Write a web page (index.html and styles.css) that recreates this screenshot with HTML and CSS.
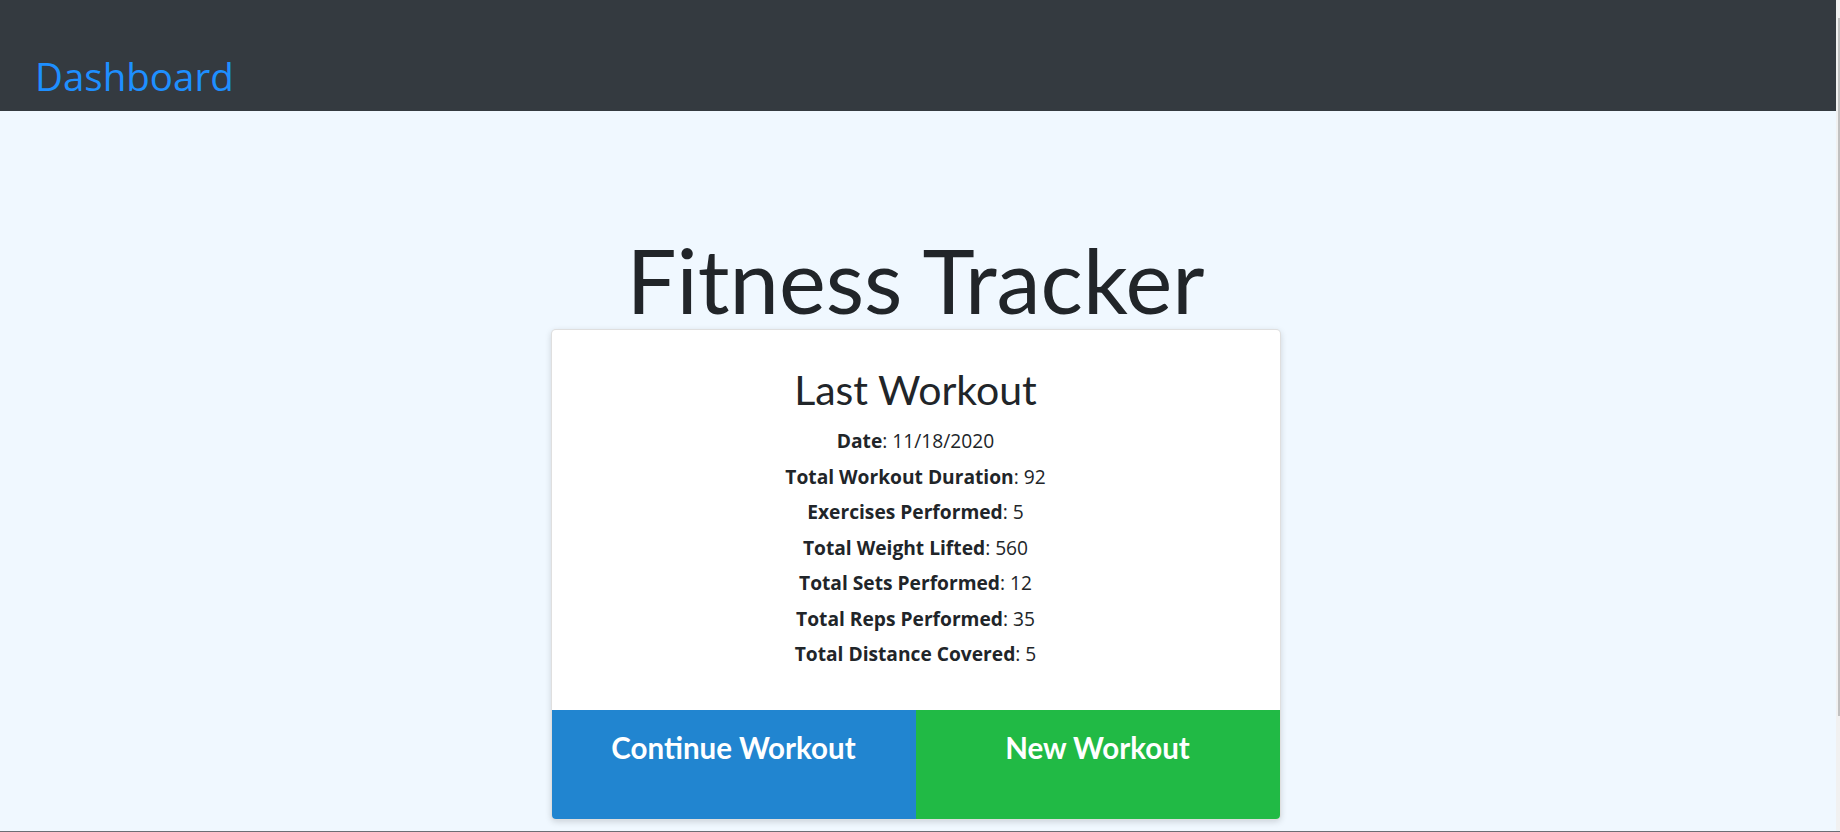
FILE: index.html
```html
<!DOCTYPE html>
<html lang="en">
<head>
<meta charset="utf-8">
<title>Fitness Tracker</title>
<link rel="stylesheet" href="styles.css">
</head>
<body>
<div class="window">
  <div class="frame">
    <main class="page">
      <nav class="navbar">
        <a class="brand" href="#">Dashboard</a>
      </nav>
      <div class="content">
        <h1 class="title">Fitness Tracker</h1>
        <section class="card">
          <div class="card-body">
            <h2 class="card-title">Last Workout</h2>
            <div class="stats">
              <div class="stat"><strong>Date</strong>: 11/18/2020</div>
              <div class="stat"><strong>Total Workout Duration</strong>: 92</div>
              <div class="stat"><strong>Exercises Performed</strong>: 5</div>
              <div class="stat"><strong>Total Weight Lifted</strong>: 560</div>
              <div class="stat"><strong>Total Sets Performed</strong>: 12</div>
              <div class="stat"><strong>Total Reps Performed</strong>: 35</div>
              <div class="stat"><strong>Total Distance Covered</strong>: 5</div>
            </div>
          </div>
          <div class="actions">
            <button class="btn btn-blue" type="button">Continue Workout</button>
            <button class="btn btn-green" type="button">New Workout</button>
          </div>
        </section>
      </div>
    </main>
    <div class="scrollbar"><div class="thumb"></div></div>
  </div>
  <div class="edge"></div>
</div>
</body>
</html>
```
FILE: styles.css
```css
* { box-sizing: border-box; }
html, body { margin: 0; padding: 0; height: 100%; }
body {
  background: #f0f8ff;
  color: #212529;
  font-family: "Open Sans", "Noto Sans", "Liberation Sans", sans-serif;
  overflow: hidden;
}
.window {
  display: flex;
  flex-direction: column;
  height: 832px;
}
.frame {
  flex: 1;
  display: flex;
  min-height: 0;
}
.page {
  flex: 1;
  min-width: 0;
  overflow: hidden;
  background: #f0f8ff;
}
.navbar {
  height: 111px;
  background: #343a40;
  padding: 57px 0 0 35px;
}
.brand {
  display: inline-block;
  font-family: "Open Sans", "Noto Sans", sans-serif;
  font-size: 38.5px;
  line-height: 1;
  color: #1e8fff;
  text-decoration: none;
}
.content {
  padding-right: 5px;
}
.title {
  margin: 121px 0 0;
  text-align: center;
  font-family: Lato, "Liberation Sans", sans-serif;
  font-weight: 400;
  font-size: 88.6px;
  line-height: 1.1;
  color: #212529;
}
.card {
  width: 730px;
  margin: 0 auto 0;
  background: #fff;
  border: 1px solid rgba(0, 0, 0, 0.125);
  border-radius: 5px;
  box-shadow: 0 2px 6px rgba(0, 0, 0, 0.15);
  overflow: hidden;
}
.card-body {
  padding: 36px 20px 38px;
  text-align: center;
}
.card-title {
  margin: 0 0 9px;
  font-family: Lato, "Liberation Sans", sans-serif;
  font-weight: 400;
  font-size: 41px;
  line-height: 48px;
  color: #212529;
}
.stat {
  font-size: 19.2px;
  line-height: 35.5px;
  color: #212529;
}
.stat strong { font-weight: 700; }
.actions {
  display: flex;
  height: 109px;
}
.btn {
  flex: 1;
  border: 0;
  margin: 0;
  padding: 20px 0 0;
  display: flex;
  justify-content: center;
  align-items: flex-start;
  font-family: Lato, "Liberation Sans", sans-serif;
  font-weight: 700;
  font-size: 29.5px;
  line-height: 1.2;
  color: #fff;
  cursor: pointer;
}
.btn-blue { background: #2185d0; }
.btn-green { background: #21ba45; }
.scrollbar {
  width: 4px;
  background: #f1f1f1;
  display: flex;
  justify-content: flex-end;
  padding-top: 18px;
}
.thumb {
  width: 2px;
  height: 698px;
  background: #c1c1c1;
}
.edge {
  height: 1px;
  background: #6b6e75;
}
```
